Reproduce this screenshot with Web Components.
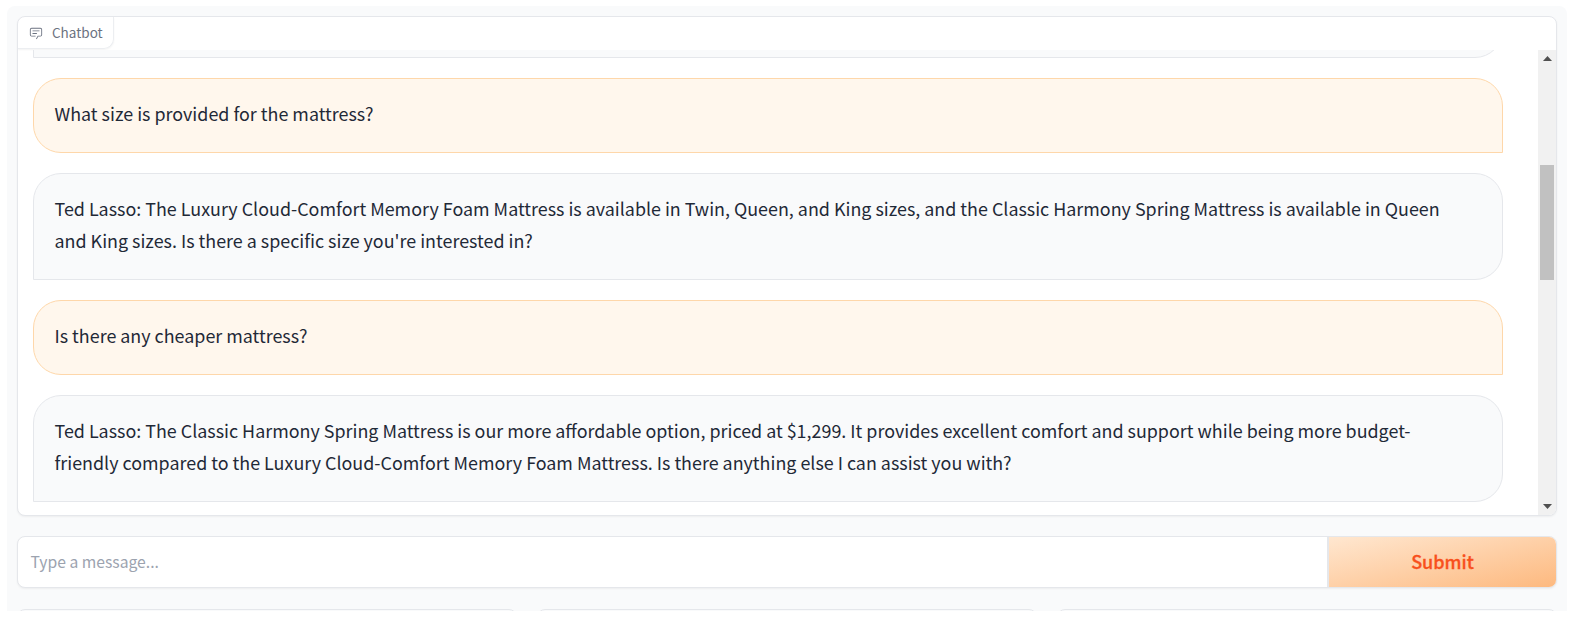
<!DOCTYPE html>
<html lang="en">
<head>
    <meta charset="UTF-8">
    <title>Chatbot</title>
    <style>
        html, body { margin: 0; height: 620px; overflow: hidden; background: #fff; }
        body { font-family: "Noto Sans CJK SC", "Noto Sans", sans-serif; color: #1f2937; }
    </style>
</head>
<body>
    <chat-app>
        <chat-panel>
            <chat-message role="bot" clipped></chat-message>
            <chat-message role="user">What size is provided for the mattress?</chat-message>
            <chat-message role="bot">Ted Lasso: The Luxury Cloud-Comfort Memory Foam Mattress is available in Twin, Queen, and King sizes, and the Classic Harmony Spring Mattress is available in Queen and King sizes. Is there a specific size you're interested in?</chat-message>
            <chat-message role="user">Is there any cheaper mattress?</chat-message>
            <chat-message role="bot">Ted Lasso: The Classic Harmony Spring Mattress is our more affordable option, priced at $1,299. It provides excellent comfort and support while being more budget-friendly compared to the Luxury Cloud-Comfort Memory Foam Mattress. Is there anything else I can assist you with?</chat-message>
        </chat-panel>
        <chat-input></chat-input>
        <card-row></card-row>
    </chat-app>

    <template id="app-template">
        <style>
            :host {
                display: block;
                box-sizing: border-box;
                width: 1560px;
                height: 605px;
                margin: 6px 0 0 7px;
                padding: 10px;
                background: #f9fafb;
                border-radius: 8px 8px 0 0;
                overflow: hidden;
            }
            .stack { display: flex; flex-direction: column; gap: 20px; }
        </style>
        <div class="stack"><slot></slot></div>
    </template>

    <template id="panel-template">
        <style>
            :host {
                display: block;
                box-sizing: border-box;
                height: 500px;
                background: #fff;
                border: 1px solid #e5e7eb;
                border-radius: 8px;
                box-shadow: 0 1px 2px rgba(0,0,0,.05);
                overflow: hidden;
            }
            .tabbar { height: 33px; display: flex; }
            .tab {
                box-sizing: border-box;
                width: 96px;
                height: 32px;
                display: flex;
                align-items: center;
                gap: 9px;
                padding: 0 0 2px 11px;
                font-size: 13.5px;
                line-height: 20px;
                color: #6b7280;
                border-right: 1px solid #eceef1;
                border-bottom: 1px solid #eceef1;
                border-bottom-right-radius: 10px;
                box-shadow: 0 1px 2px rgba(0,0,0,.05);
            }
            .tab svg { width: 14px; height: 14px; flex: none; margin-top: 3px; }
            .body { display: flex; height: 465px; }
            .scroll {
                flex: 1;
                min-width: 0;
                overflow: hidden;
                display: flex;
                flex-direction: column;
                gap: 20px;
                padding: 0 35px 0 15px;
            }
        </style>
        <div class="tabbar">
            <div class="tab">
                <svg viewBox="0 0 32 32" fill="currentColor"><path d="M17.74 30L16 29l4-7h6a2 2 0 0 0 2-2V8a2 2 0 0 0-2-2H6a2 2 0 0 0-2 2v12a2 2 0 0 0 2 2h9v2H6a4 4 0 0 1-4-4V8a4 4 0 0 1 4-4h20a4 4 0 0 1 4 4v12a4 4 0 0 1-4 4h-4.84Z"/><path d="M8 10h16v2H8zm0 6h10v2H8z"/></svg>
                Chatbot
            </div>
        </div>
        <div class="body">
            <div class="scroll"><slot></slot></div>
            <chat-scrollbar></chat-scrollbar>
        </div>
    </template>

    <template id="message-template">
        <style>
            :host {
                display: block;
                box-sizing: border-box;
                flex: none;
                padding: 18px 40px 23px 20.5px;
                font-size: 17.9px;
                line-height: 32px;
                color: #1f2937;
                border: 1px solid;
                border-radius: 28px;
            }
            :host([role="user"]) {
                background: #fff7ed;
                border-color: #fed7aa;
                border-bottom-right-radius: 0;
            }
            :host([role="bot"]) {
                background: #f9fafb;
                border-color: #e5e7eb;
                border-bottom-left-radius: 0;
            }
            :host([clipped]) {
                height: 60px;
                margin-top: -51.6px;
            }
        </style>
        <slot></slot>
    </template>

    <template id="scrollbar-template">
        <style>
            :host {
                display: flex;
                flex-direction: column;
                flex: none;
                width: 18px;
                background: #f1f1f1;
            }
            .arrow { height: 17px; flex: none; display: flex; align-items: center; justify-content: center; }
            .arrow svg { width: 9px; height: 5px; }
            .track { flex: 1; padding: 98px 2px 0; }
            .thumb { height: 115px; background: #c1c1c1; }
        </style>
        <div class="arrow"><svg viewBox="0 0 9 5"><path d="M4.5 0L9 5H0z" fill="#505050"/></svg></div>
        <div class="track"><div class="thumb"></div></div>
        <div class="arrow"><svg viewBox="0 0 9 5"><path d="M0 0h9L4.5 5z" fill="#505050"/></svg></div>
    </template>

    <template id="input-template">
        <style>
            :host {
                display: flex;
                box-sizing: border-box;
                height: 52px;
                border: 1px solid #e5e7eb;
                border-radius: 8px;
                overflow: hidden;
                background: #fff;
                box-shadow: 0 1px 2px rgba(0,0,0,.05);
            }
            .field {
                flex: 1;
                min-width: 0;
                display: flex;
                align-items: center;
                padding: 0 0 2px 12.5px;
                font-size: 15.7px;
                color: #9ca3af;
            }
            button {
                width: 229px;
                flex: none;
                border: 0;
                border-left: 2px solid #e5e7eb;
                padding: 0 0 2px;
                font: 500 18px "Noto Sans CJK SC", "Noto Sans", sans-serif;
                -webkit-text-stroke: .3px #f8501c;
                color: #f8501c;
                background: linear-gradient(to bottom right, #ffe7d0, #fdb97f);
            }
        </style>
        <div class="field">Type a message...</div>
        <button>Submit</button>
    </template>

    <template id="cards-template">
        <style>
            :host { display: grid; grid-template-columns: repeat(3, 1fr); gap: 20px; margin-top: 1px; }
            div {
                height: 40px;
                background: #f9fafb;
                border: 1px solid #e5e7eb;
                border-radius: 8px;
                box-sizing: border-box;
            }
        </style>
        <div></div><div></div><div></div>
    </template>

    <script>
        // every element clones its own template into an open shadow root
        function register(name, templateId) {
            customElements.define(name, class extends HTMLElement {
                constructor() {
                    super()
                    const content = document.querySelector(templateId).content
                    this.attachShadow({mode: 'open'}).appendChild(content.cloneNode(true))
                }
            })
        }

        register('chat-app', '#app-template')
        register('chat-panel', '#panel-template')
        register('chat-message', '#message-template')
        register('chat-scrollbar', '#scrollbar-template')
        register('chat-input', '#input-template')
        register('card-row', '#cards-template')
    </script>
</body>
</html>
